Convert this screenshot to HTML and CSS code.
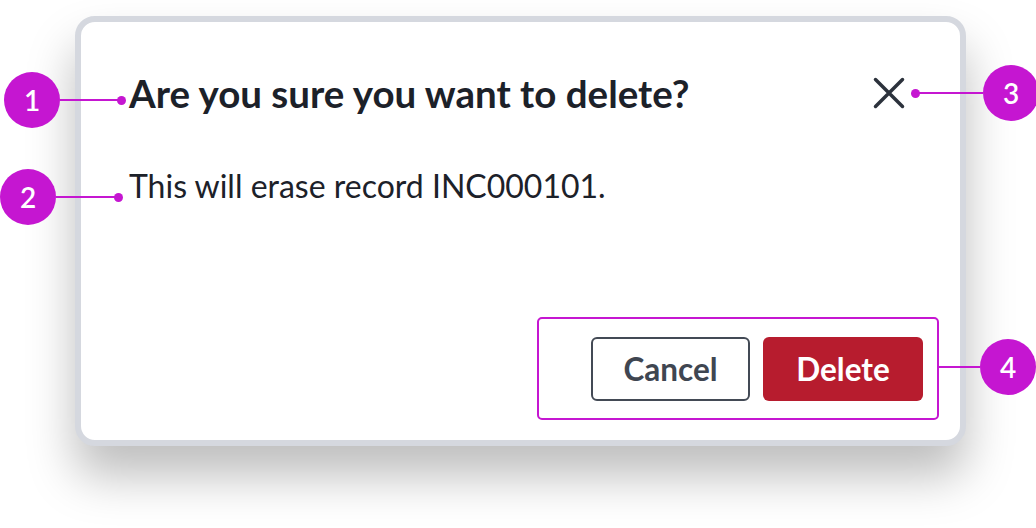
FILE: index.html
```html
<!DOCTYPE html>
<html lang="en">
<head>
<meta charset="utf-8">
<title>Delete modal</title>
<link rel="stylesheet" href="styles.css">
</head>
<body>
<div class="stage">
  <section class="dialog">
    <header class="dialog-header">
      <h1 class="dialog-title">Are you sure you want to delete?</h1>
      <button class="close-btn" aria-label="Close">
        <svg width="32" height="32" viewBox="0 0 32 32"><path d="M2.5 2.5 L29.5 29.5 M29.5 2.5 L2.5 29.5" stroke="#2c323c" stroke-width="3.5" stroke-linecap="round" fill="none"/></svg>
      </button>
    </header>
    <p class="dialog-body">This will erase record INC000101.</p>
    <footer class="dialog-footer">
      <div class="actions">
        <button class="btn btn-secondary">Cancel</button>
        <button class="btn btn-danger">Delete</button>
      </div>
    </footer>
  </section>

  <div class="callout callout-1"><span class="badge">1</span><span class="leader"></span><span class="dot"></span></div>
  <div class="callout callout-2"><span class="badge">2</span><span class="leader"></span><span class="dot"></span></div>
  <div class="callout callout-3"><span class="dot"></span><span class="leader"></span><span class="badge">3</span></div>
  <div class="callout callout-4"><span class="leader"></span><span class="badge">4</span></div>
</div>
</body>
</html>
```

FILE: styles.css
```css
* { box-sizing: border-box; }
html, body {
  margin: 0;
  padding: 0;
  background: #ffffff;
}
body {
  font-family: Lato, "Open Sans", sans-serif;
  width: 1036px;
  height: 528px;
  overflow: hidden;
}
.stage {
  position: relative;
  width: 1036px;
  height: 528px;
  padding: 16px 0 0 75px;
}
.dialog {
  width: 891px;
  height: 430px;
  background: #ffffff;
  border: 6px solid #d5d8df;
  border-radius: 20px;
  box-shadow: 0 30px 48px rgba(0, 0, 0, 0.26);
  display: flex;
  flex-direction: column;
  padding: 0 0 20px 48px;
}
.dialog-header {
  display: flex;
  align-items: center;
  justify-content: space-between;
  padding: 48px 55px 0 0;
  height: 94px;
}
.dialog-title {
  margin: 0;
  font-size: 38.5px;
  font-weight: 700;
  color: #1c2129;
  line-height: 46px;
}
.close-btn {
  border: 0;
  background: none;
  padding: 0;
  width: 32px;
  height: 32px;
  display: flex;
}
.dialog-body {
  margin: 50px 0 0 0;
  font-size: 32px;
  line-height: 40px;
  color: #1c2129;
}
.dialog-footer {
  margin-top: auto;
  display: flex;
  justify-content: flex-end;
  padding-right: 21px;
}
.actions {
  display: flex;
  justify-content: flex-end;
  gap: 13px;
  width: 402px;
  height: 103px;
  padding: 18px 14px 18px 0;
  border: 2px solid #c516d1;
  border-radius: 5px;
}
.btn {
  height: 64px;
  border-radius: 6px;
  font-family: Lato, "Open Sans", sans-serif;
  font-size: 31.5px;
  font-weight: 700;
  padding: 0;
}
.btn-secondary {
  width: 159px;
  background: #ffffff;
  color: #3f4651;
  border: 2px solid #434a55;
}
.btn-danger {
  width: 160px;
  background: #b71c2e;
  color: #ffffff;
  border: 0;
}

/* annotation callouts */
.callout {
  position: absolute;
  display: flex;
  align-items: center;
}
.badge {
  width: 56px;
  height: 56px;
  border-radius: 50%;
  background: #c516d1;
  color: #ffffff;
  font-size: 28px;
  font-weight: 600;
  display: flex;
  align-items: center;
  justify-content: center;
  flex: none;
}
.leader {
  height: 2px;
  background: #c516d1;
  flex: none;
}
.dot {
  width: 9px;
  height: 9px;
  border-radius: 50%;
  background: #c516d1;
  flex: none;
  margin-left: -2px;
}
.callout-1 { left: 4px; top: 72px; }
.callout-1 .leader { width: 59px; }
.callout-2 { left: 0; top: 169px; }
.callout-2 .leader { width: 60px; }
.callout-3 { left: 911px; top: 65px; }
.callout-3 .dot { margin-left: 0; margin-right: -2px; }
.callout-3 .leader { width: 65px; }
.callout-4 { left: 939px; top: 339px; }
.callout-4 .leader { width: 41px; }
```
